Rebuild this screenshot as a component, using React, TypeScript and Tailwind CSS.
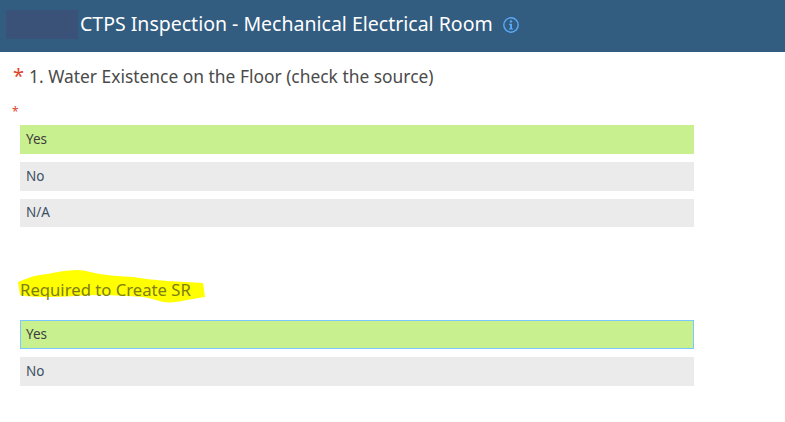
const font = "font-['Noto_Sans',sans-serif]";

function Choice({ label, selected, focused, short }: { label: string; selected?: boolean; focused?: boolean; short?: boolean }) {
  return (
    <div
      className={
        'flex w-[674px] items-center px-[6px] pb-[1px] text-[13.5px] ' +
        (short ? 'h-[28px] ' : 'h-[29px] ') +
        (selected ? 'bg-[#c8f08f] text-[#3d3d3d] ' : 'bg-[#ebebeb] text-[#3d4f63] ') +
        (focused ? 'border border-[#7cc7ff] pl-[5px]' : '')
      }
    >
      {label}
    </div>
  );
}

export default function App() {
  return (
    <div className={`h-[422px] w-[785px] overflow-hidden bg-white ${font}`}>
      {/* Header */}
      <header className="flex h-[52px] items-center bg-[#325c80] pb-[4px] pl-[6px]">
        <div className="h-[29px] w-[72px] bg-[#3a5278]" />
        <h1 className="ml-[2px] text-[19.5px] leading-none text-white">CTPS Inspection - Mechanical Electrical Room</h1>
        <svg className="ml-[10px] mt-[1px]" width="16" height="16" viewBox="0 0 16 16" fill="none">
          <circle cx="8" cy="8" r="7.2" stroke="#5aaafa" strokeWidth="1.4" />
          <circle cx="8" cy="4.4" r="1.2" fill="#5aaafa" />
          <path d="M6 6.8h3v4.6h1.2v1.2H5.9v-1.2h1.2V8H6z" fill="#5aaafa" />
        </svg>
      </header>

      {/* Question 1 */}
      <div className="flex h-[48px] items-center pl-[13px] text-[17.4px] text-[#4a4a4a]">
        <span className="mr-[5px] text-[20px] leading-none text-[#e0452a]">*</span>
        1. Water Existence on the Floor (check the source)
      </div>
      <div className="h-[25px] pl-[12px] pt-[6px] text-[12px] leading-none text-[#e0452a]">*</div>
      <div className="flex flex-col gap-[8px] pl-[20px]">
        <Choice label="Yes" selected />
        <Choice label="No" />
        <Choice label="N/A" short />
      </div>

      {/* Required to Create SR */}
      <div className="relative mt-[42px] flex h-[51px] items-start pl-[20px] text-[16.7px] text-[#7d7d14]">
        <svg className="absolute left-[18px] top-0" width="190" height="36" viewBox="0 0 190 36">
          <path
            d="M0 13 C8 10 14 7 22 6 C36 4 48 1 59 1 C68 1 74 4 82 5 C94 7 104 7 115 8 C128 10 138 11 149 12 C162 13 174 13 185 14 L187 28 C180 29 175 30 169 31 C160 33 152 34 145 33 C138 31 132 29 125 28 C110 27 96 26 82 26 C66 26 48 28 32 28 C22 28 12 28 2 26 Z"
            fill="#ffff00"
          />
        </svg>
        <span className="relative mt-[4px] leading-[34px]">Required to Create SR</span>
      </div>
      <div className="flex flex-col gap-[8px] pl-[20px]">
        <Choice label="Yes" selected focused />
        <Choice label="No" />
      </div>
    </div>
  );
}
